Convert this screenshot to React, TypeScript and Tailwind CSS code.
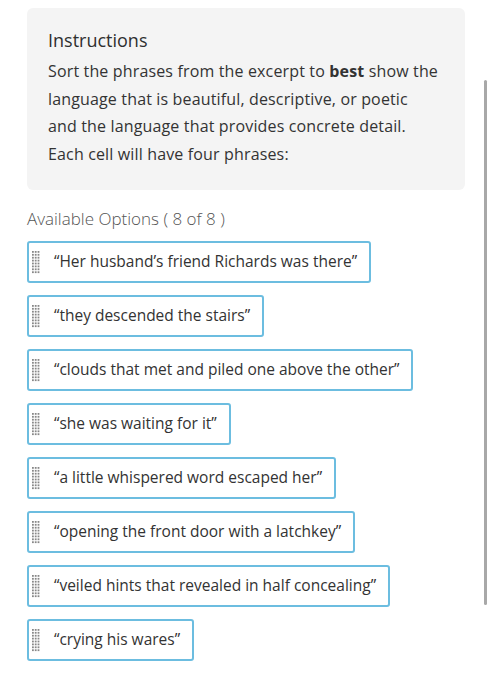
const options = [
  "“Her husband’s friend Richards was there”",
  "“they descended the stairs”",
  "“clouds that met and piled one above the other”",
  "“she was waiting for it”",
  "“a little whispered word escaped her”",
  "“opening the front door with a latchkey”",
  "“veiled hints that revealed in half concealing”",
  "“crying his wares”",
];

function Handle() {
  const dots = [];
  for (let r = 0; r < 8; r++) {
    for (let c = 0; c < 3; c++) {
      dots.push(<rect key={`${r}-${c}`} x={c * 2.8} y={r * 2.9} width="1.8" height="1.8" fill="#888" />);
    }
  }
  return (
    <svg width="8" height="23" viewBox="0 0 8 23" className="shrink-0">
      {dots}
    </svg>
  );
}

export default function App() {
  return (
    <div className="relative w-[493px] h-[700px] bg-white font-['Open_Sans',sans-serif] text-[#333]">
      <div className="pt-2 pl-[27px] pr-[28px]">
        <div className="bg-[#f4f4f4] rounded-md pl-[21px] pr-4 pt-[20px] pb-[22px]">
          <h1 className="text-[18px] leading-6 text-[#2f2f2f]">Instructions</h1>
          <p className="mt-[6px] text-[16px] leading-[27.5px] tracking-[0.15px] text-[#333]">
            Sort the phrases from the excerpt to <b className="font-bold">best</b> show the
            <br />
            language that is beautiful, descriptive, or poetic
            <br />
            and the language that provides concrete detail.
            <br />
            Each cell will have four phrases:
          </p>
        </div>
      </div>

      <div className="pl-[27px] mt-[19px]">
        <div className="text-[17px] leading-5 text-[#555] font-light">Available Options ( 8 of 8 )</div>
        <div className="mt-[12px] flex flex-col items-start gap-3">
          {options.map((o) => (
            <div
              key={o}
              className="h-[42px] flex items-center gap-[14px] pl-[3px] pr-[12px] border-2 border-[#6cbde0] rounded-[3px] bg-white"
            >
              <Handle />
              <span className="text-[15.5px] text-[#333] whitespace-nowrap">{o}</span>
            </div>
          ))}
        </div>
      </div>

      <div className="absolute left-[484px] top-[80px] w-[3px] h-[525px] rounded-full bg-[#a8a8a8]" />
    </div>
  );
}
